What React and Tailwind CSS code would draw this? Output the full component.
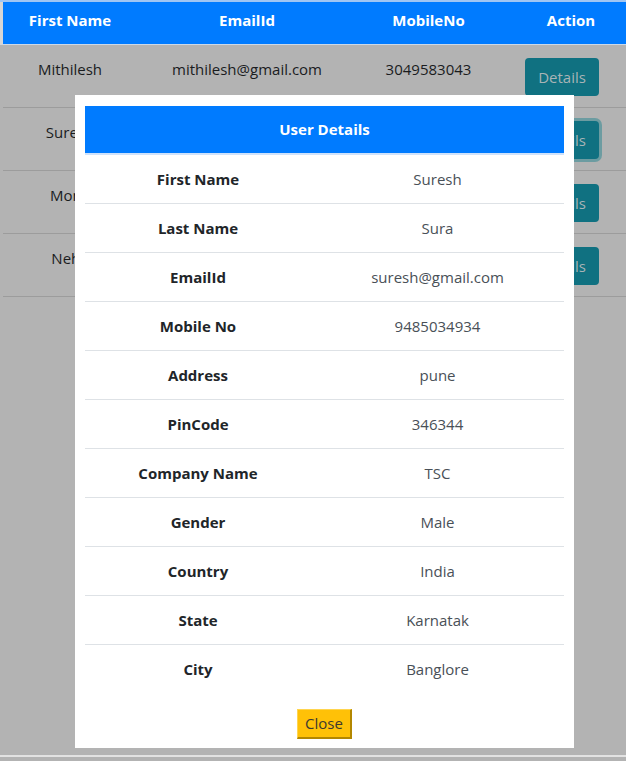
import React from 'react'

const users = [
  { first: 'Mithilesh', email: 'mithilesh@gmail.com', mobile: '3049583043' },
  { first: 'Suresh', email: 'suresh@gmail.com', mobile: '9485034934', focused: true },
  { first: 'Mona', email: 'mona@gmail.com', mobile: '9384756102' },
  { first: 'Neha', email: 'neha@gmail.com', mobile: '8394756201' },
]

const details = [
  ['First Name', 'Suresh'],
  ['Last Name', 'Sura'],
  ['EmailId', 'suresh@gmail.com'],
  ['Mobile No', '9485034934'],
  ['Address', 'pune'],
  ['PinCode', '346344'],
  ['Company Name', 'TSC'],
  ['Gender', 'Male'],
  ['Country', 'India'],
  ['State', 'Karnatak'],
  ['City', 'Banglore'],
]

const cols = 'grid grid-cols-[134px_220px_143px_142px]'

export default function App() {
  return (
    <div
      className="relative flex h-[761px] w-[626px] flex-col overflow-hidden bg-[#b3b3b3]"
      style={{ fontFamily: '"Open Sans", "Noto Sans", sans-serif' }}
    >
      <div className="h-[2px] bg-[#9fc5f3]" />

      {/* table header */}
      <div className={cols + ' h-[43px] items-start border-b border-l-[3px] border-b-[#cdd9e8] border-l-[#d6d6d6] bg-[#007bff] pt-[7px] text-[15px] font-bold text-white'}>
        <div className="text-center">First Name</div>
        <div className="text-center">EmailId</div>
        <div className="text-center">MobileNo</div>
        <div className="text-center">Action</div>
      </div>

      {/* dimmed rows */}
      <div className="border-l-[3px] border-[#b3b3b3]">
        {users.map((u, i) => (
          <div key={i} className={cols + ' h-[63px] border-b border-[#9c9c9c] text-[15px] text-[#1a1c1e]'}>
            <div className="pt-[13px] text-center">{u.first}</div>
            <div className="pt-[13px] text-center">{u.email}</div>
            <div className="pt-[13px] text-center">{u.mobile}</div>
            <div className="pl-[25px] pt-[13px]">
              <button
                className={
                  'h-[38px] w-[74px] rounded-[4px] bg-[#107181] text-[15px] text-[#a9b4b6] ' +
                  (u.focused ? 'ring-[3px] ring-[#6c9ca1]' : '')
                }
              >
                Details
              </button>
            </div>
          </div>
        ))}
      </div>

      <div className="flex-1" />
      <div className="h-[2px] bg-[#e2e2e2]" />
      <div className="h-[4px]" />

      {/* modal */}
      <div className="absolute left-[75px] top-[95px] flex h-[653px] w-[499px] flex-col bg-white px-[10px] pt-[11px]">
        <div className="flex h-[49px] items-center justify-center border-b-2 border-[#cfe2fb] bg-[#007bff] text-[15px] font-bold text-white">
          User Details
        </div>
        {details.map(([label, value], i) => (
          <div
            key={label}
            className={
              'grid h-[49px] grid-cols-[226px_1fr] items-center ' +
              (i < details.length - 1 ? 'border-b border-[#dee2e6]' : '')
            }
          >
            <div className="text-center text-[15px] font-bold text-[#212529]">{label}</div>
            <div className="text-center text-[15px] text-[#495057]">{value}</div>
          </div>
        ))}
        <div className="flex justify-center pt-[15px]">
          <button className="h-[30px] w-[55px] border-b-2 border-r-2 border-l border-t border-b-[#b38700] border-r-[#b38700] border-l-[#ffd54f] border-t-[#ffd54f] bg-[#ffc107] text-[15px] text-[#3d3a30]">
            Close
          </button>
        </div>
      </div>
    </div>
  )
}
